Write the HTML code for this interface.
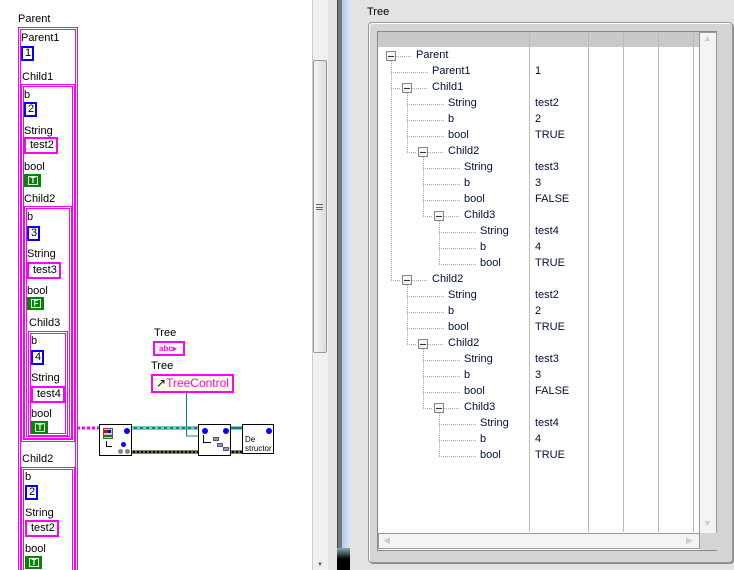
<!DOCTYPE html>
<html><head><meta charset="utf-8"><style>
*{margin:0;padding:0;box-sizing:border-box}
html{width:734px;height:570px;overflow:hidden}
body{width:734px;height:570px;overflow:hidden;background:#fff;font-family:"Liberation Sans",sans-serif;font-size:11px;color:#000;position:relative}
.a{position:absolute;white-space:nowrap}
.cl{position:absolute;border:1px solid #f0f;box-shadow:inset 0 0 0 1px #fff,inset 0 0 0 2px #f0f}
.num{position:absolute;border:2px solid #00f;width:13px;height:15px;font-size:11px;line-height:11px;padding-left:2px;background:#fff}
.str{position:absolute;border:2px solid #f0f;height:17px;font-size:11px;line-height:13px;padding:0 2px 0 4px;background:#fff}
.bl{position:absolute;width:17px;height:13px;background:#080;border:1px solid #080}
.bl span{display:block;margin:1px 3px;width:10px;height:9px;border:1px solid #fff;color:#fff;font-size:8px;font-weight:bold;line-height:8px;text-align:center}
.t{position:absolute;color:#001040;font-size:11px;line-height:14px;white-space:nowrap}
.node{position:absolute;border:1px solid #000;background:#fff}
</style></head><body>
<!-- left panel -->
<div class="a" style="left:18px;top:13px">Parent</div>
<div class="cl" style="left:18px;top:27px;width:60px;height:560px"></div>
<div class="a" style="left:21px;top:32px">Parent1</div>
<div class="num" style="left:21px;top:46px">1</div>
<div class="a" style="left:22px;top:71px">Child1</div>
<div class="cl" style="left:21px;top:84px;width:54px;height:358px"></div>
<div class="a" style="left:24px;top:89px">b</div>
<div class="num" style="left:24px;top:102px">2</div>
<div class="a" style="left:24px;top:125px">String</div>
<div class="str" style="left:24px;top:137px">test2</div>
<div class="a" style="left:24px;top:161px">bool</div>
<div class="bl" style="left:24px;top:174px"><span>T</span></div>
<div class="a" style="left:24px;top:193px">Child2</div>
<div class="cl" style="left:24px;top:206px;width:48px;height:233px"></div>
<div class="a" style="left:27px;top:211px">b</div>
<div class="num" style="left:27px;top:226px">3</div>
<div class="a" style="left:27px;top:248px">String</div>
<div class="str" style="left:27px;top:262px">test3</div>
<div class="a" style="left:27px;top:285px">bool</div>
<div class="bl" style="left:27px;top:297px"><span>F</span></div>
<div class="a" style="left:29px;top:317px">Child3</div>
<div class="cl" style="left:28px;top:331px;width:40px;height:105px"></div>
<div class="a" style="left:31px;top:335px">b</div>
<div class="num" style="left:31px;top:350px">4</div>
<div class="a" style="left:31px;top:372px">String</div>
<div class="str" style="left:31px;top:386px">test4</div>
<div class="a" style="left:31px;top:408px">bool</div>
<div class="bl" style="left:31px;top:421px"><span>T</span></div>
<div class="a" style="left:22px;top:453px">Child2</div>
<div class="cl" style="left:21px;top:467px;width:54px;height:120px"></div>
<div class="a" style="left:25px;top:471px">b</div>
<div class="num" style="left:25px;top:485px">2</div>
<div class="a" style="left:25px;top:507px">String</div>
<div class="str" style="left:25px;top:520px">test2</div>
<div class="a" style="left:25px;top:543px">bool</div>
<div class="bl" style="left:25px;top:556px"><span>T</span></div>

<!-- diagram -->
<div class="a" style="left:154px;top:327px">Tree</div>
<div class="a" style="left:153px;top:341px;width:32px;height:15px;border:2px solid #f0f;background:#fff;font-size:8px;font-weight:bold;color:#f0f;line-height:11px;padding-left:4px">abc▸</div>
<div class="a" style="left:151px;top:360px">Tree</div>
<div class="a" style="left:151px;top:374px;width:83px;height:19px;border:2px solid #f0f;background:#ffffe8;color:#f0f;font-size:12px;line-height:15px;padding-left:3px"><span style="color:#000">↗</span>TreeControl</div>
<svg class="a" style="left:0;top:0" width="310" height="570">
<line x1="77" y1="428" x2="99" y2="428" stroke="#f0f" stroke-width="3" stroke-dasharray="3 2"/>
<line x1="131" y1="428" x2="198" y2="428" stroke="#088" stroke-width="3"/>
<line x1="131" y1="428" x2="198" y2="428" stroke="#fff" stroke-width="1" stroke-dasharray="3 3"/>
<line x1="230" y1="428" x2="242" y2="428" stroke="#088" stroke-width="3"/>
<line x1="131" y1="452" x2="198" y2="452" stroke="#000" stroke-width="3"/>
<line x1="131" y1="452" x2="198" y2="452" stroke="#ee0" stroke-width="1" stroke-dasharray="2 2"/>
<line x1="230" y1="452" x2="242" y2="452" stroke="#000" stroke-width="3"/>
<line x1="230" y1="452" x2="242" y2="452" stroke="#ee0" stroke-width="1" stroke-dasharray="2 2"/>
<polyline points="186.5,393 186.5,436 198,436" fill="none" stroke="#088" stroke-width="1"/>
</svg>
<div class="node" style="left:99px;top:424px;width:33px;height:32px">
<div class="a" style="left:3px;top:3px;width:10px;height:11px;background:#ccc;border:1px solid #555"></div>
<div class="a" style="left:4px;top:5px;width:4px;height:3px;background:#d00"></div>
<div class="a" style="left:8px;top:5px;width:3px;height:3px;background:#00d"></div>
<div class="a" style="left:4px;top:10px;width:8px;height:2px;background:#080"></div>
<div class="a" style="left:24px;top:3px;width:6px;height:6px;border-radius:3px;background:#00f"></div>
<div class="a" style="left:21px;top:17px;width:5px;height:5px;border-radius:3px;background:#00f"></div>
<div class="a" style="left:18px;top:24px;width:5px;height:5px;border-radius:3px;background:#888"></div>
<div class="a" style="left:25px;top:24px;width:5px;height:5px;border-radius:3px;background:#888"></div>
<div class="a" style="left:6px;top:16px;width:6px;height:6px;border-left:1px solid #000;border-bottom:1px solid #000"></div>
</div>
<div class="node" style="left:198px;top:424px;width:33px;height:32px">
<div class="a" style="left:3px;top:3px;width:6px;height:6px;border-radius:3px;background:#00f"></div>
<div class="a" style="left:24px;top:3px;width:6px;height:6px;border-radius:3px;background:#00f"></div>
<div class="a" style="left:4px;top:10px;width:8px;height:8px;border-left:1px solid #000;border-bottom:1px solid #000"></div>
<div class="a" style="left:14px;top:12px;width:6px;height:4px;background:#99b;border:1px solid #557"></div>
<div class="a" style="left:18px;top:18px;width:6px;height:4px;background:#99b;border:1px solid #557"></div>
<div class="a" style="left:24px;top:22px;width:6px;height:4px;background:#99b;border:1px solid #557"></div>
</div>
<div class="node" style="left:242px;top:424px;width:32px;height:30px;font-size:8px;line-height:9px;padding:10px 0 0 2px">De<br>structor
<div class="a" style="left:23px;top:3px;width:6px;height:6px;border-radius:3px;background:#00f"></div></div>

<!-- left scrollbar -->
<div class="a" style="left:312px;top:0;width:16px;height:570px;background:#f0f0f0;border-left:1px solid #ccc"></div>
<div class="a" style="left:313px;top:60px;width:14px;height:293px;background:linear-gradient(90deg,#f4f4f4,#dcdcdc);border:1px solid #999;border-radius:2px"></div>
<div class="a" style="left:316px;top:204px;width:7px;height:6px;border-top:1px solid #666;border-bottom:1px solid #666"><div style="margin-top:2px;border-top:1px solid #666"></div></div>
<div class="a" style="left:317px;top:562px;font-size:6px;color:#555">▼</div>
<!-- divider -->
<div class="a" style="left:328px;top:0;width:22px;height:570px;background:#e3e3e3"></div>
<div class="a" style="left:337px;top:0;width:5px;height:570px;background:#777;border-left:1px solid #444"></div>
<div class="a" style="left:342px;top:0;width:8px;height:570px;background:linear-gradient(90deg,#b0cde8,#d6e6f6)"></div>
<div class="a" style="left:337px;top:548px;width:13px;height:22px;background:linear-gradient(#8aa,#000 50%)"></div>

<!-- right panel -->
<div class="a" style="left:350px;top:0;width:384px;height:570px;background:#e3e3e3"></div>
<div class="a" style="left:367px;top:6px;font-size:11px">Tree</div>
<div class="a" style="left:368px;top:22px;width:365px;height:541px;border:1px solid #999;border-radius:4px;background:#d4d4d4;box-shadow:inset 1px 1px 0 #fff,1px 1px 0 #888"></div>
<div class="a" style="left:377px;top:31px;width:340px;height:520px;border:1px solid #888;background:#fff"></div>
<div class="a" style="left:378px;top:32px;width:322px;height:15px;background:#c9c9c9"></div>
<div class="a" style="left:529px;top:32px;width:1px;height:500px;background:#bbb"></div>
<div class="a" style="left:588px;top:32px;width:1px;height:500px;background:#bbb"></div>
<div class="a" style="left:623px;top:32px;width:1px;height:500px;background:#bbb"></div>
<div class="a" style="left:658px;top:32px;width:1px;height:500px;background:#bbb"></div>
<div class="a" style="left:693px;top:32px;width:1px;height:500px;background:#bbb"></div>
<div class="a" style="left:699px;top:32px;width:18px;height:502px;background:#f4f4f4;border:1px solid #999"></div>
<div class="a" style="left:703px;top:33px;font-size:9px;color:#ccc">▲</div>
<div class="a" style="left:703px;top:518px;font-size:9px;color:#ccc">▼</div>
<div class="a" style="left:378px;top:533px;width:322px;height:16px;background:#f4f4f4;border:1px solid #999"></div>
<div class="a" style="left:383px;top:535px;font-size:9px;color:#ccc">◀</div>
<div class="a" style="left:686px;top:535px;font-size:9px;color:#ccc">▶</div>
<div class="a" style="left:700px;top:533px;width:17px;height:17px;background:#d4d4d4"></div>

<svg class="a" style="left:0;top:0" width="734" height="570">
<g stroke="#aaa" stroke-width="1" stroke-dasharray="1 1" fill="none">
<line x1="391.5" y1="61" x2="391.5" y2="280"/>
<line x1="407.5" y1="93" x2="407.5" y2="152"/>
<line x1="423.5" y1="157" x2="423.5" y2="216"/>
<line x1="439.5" y1="221" x2="439.5" y2="264"/>
<line x1="407.5" y1="285" x2="407.5" y2="344"/>
<line x1="423.5" y1="349" x2="423.5" y2="408"/>
<line x1="439.5" y1="413" x2="439.5" y2="456"/>
<line x1="396" y1="56.5" x2="412" y2="56.5"/>
<line x1="391" y1="72.5" x2="428" y2="72.5"/>
<line x1="391" y1="88.5" x2="401" y2="88.5"/><line x1="412" y1="88.5" x2="428" y2="88.5"/>
<line x1="407" y1="104.5" x2="444" y2="104.5"/>
<line x1="407" y1="120.5" x2="444" y2="120.5"/>
<line x1="407" y1="136.5" x2="444" y2="136.5"/>
<line x1="407" y1="152.5" x2="417" y2="152.5"/><line x1="428" y1="152.5" x2="444" y2="152.5"/>
<line x1="423" y1="168.5" x2="460" y2="168.5"/>
<line x1="423" y1="184.5" x2="460" y2="184.5"/>
<line x1="423" y1="200.5" x2="460" y2="200.5"/>
<line x1="423" y1="216.5" x2="433" y2="216.5"/><line x1="444" y1="216.5" x2="460" y2="216.5"/>
<line x1="439" y1="232.5" x2="476" y2="232.5"/>
<line x1="439" y1="248.5" x2="476" y2="248.5"/>
<line x1="439" y1="264.5" x2="476" y2="264.5"/>
<line x1="391" y1="280.5" x2="401" y2="280.5"/><line x1="412" y1="280.5" x2="428" y2="280.5"/>
<line x1="407" y1="296.5" x2="444" y2="296.5"/>
<line x1="407" y1="312.5" x2="444" y2="312.5"/>
<line x1="407" y1="328.5" x2="444" y2="328.5"/>
<line x1="407" y1="344.5" x2="417" y2="344.5"/><line x1="428" y1="344.5" x2="444" y2="344.5"/>
<line x1="423" y1="360.5" x2="460" y2="360.5"/>
<line x1="423" y1="376.5" x2="460" y2="376.5"/>
<line x1="423" y1="392.5" x2="460" y2="392.5"/>
<line x1="423" y1="408.5" x2="433" y2="408.5"/><line x1="444" y1="408.5" x2="460" y2="408.5"/>
<line x1="439" y1="424.5" x2="476" y2="424.5"/>
<line x1="439" y1="440.5" x2="476" y2="440.5"/>
<line x1="439" y1="456.5" x2="476" y2="456.5"/>
</g>
<g fill="#f4f4f4" stroke="#888">
<rect x="386.5" y="51.5" width="9" height="9"/>
<rect x="402.5" y="83.5" width="9" height="9"/>
<rect x="418.5" y="147.5" width="9" height="9"/>
<rect x="434.5" y="211.5" width="9" height="9"/>
<rect x="402.5" y="275.5" width="9" height="9"/>
<rect x="418.5" y="339.5" width="9" height="9"/>
<rect x="434.5" y="403.5" width="9" height="9"/>
</g>
<g stroke="#335" stroke-width="1">
<line x1="388" y1="56.5" x2="394" y2="56.5"/>
<line x1="404" y1="88.5" x2="410" y2="88.5"/>
<line x1="420" y1="152.5" x2="426" y2="152.5"/>
<line x1="436" y1="216.5" x2="442" y2="216.5"/>
<line x1="404" y1="280.5" x2="410" y2="280.5"/>
<line x1="420" y1="344.5" x2="426" y2="344.5"/>
<line x1="436" y1="408.5" x2="442" y2="408.5"/>
</g>
</svg>

<div class="t" style="left:416px;top:48px">Parent</div>
<div class="t" style="left:432px;top:64px">Parent1</div><div class="t" style="left:535px;top:64px">1</div>
<div class="t" style="left:432px;top:80px">Child1</div>
<div class="t" style="left:448px;top:96px">String</div><div class="t" style="left:535px;top:96px">test2</div>
<div class="t" style="left:448px;top:112px">b</div><div class="t" style="left:535px;top:112px">2</div>
<div class="t" style="left:448px;top:128px">bool</div><div class="t" style="left:535px;top:128px">TRUE</div>
<div class="t" style="left:448px;top:144px">Child2</div>
<div class="t" style="left:464px;top:160px">String</div><div class="t" style="left:535px;top:160px">test3</div>
<div class="t" style="left:464px;top:176px">b</div><div class="t" style="left:535px;top:176px">3</div>
<div class="t" style="left:464px;top:192px">bool</div><div class="t" style="left:535px;top:192px">FALSE</div>
<div class="t" style="left:464px;top:208px">Child3</div>
<div class="t" style="left:480px;top:224px">String</div><div class="t" style="left:535px;top:224px">test4</div>
<div class="t" style="left:480px;top:240px">b</div><div class="t" style="left:535px;top:240px">4</div>
<div class="t" style="left:480px;top:256px">bool</div><div class="t" style="left:535px;top:256px">TRUE</div>
<div class="t" style="left:432px;top:272px">Child2</div>
<div class="t" style="left:448px;top:288px">String</div><div class="t" style="left:535px;top:288px">test2</div>
<div class="t" style="left:448px;top:304px">b</div><div class="t" style="left:535px;top:304px">2</div>
<div class="t" style="left:448px;top:320px">bool</div><div class="t" style="left:535px;top:320px">TRUE</div>
<div class="t" style="left:448px;top:336px">Child2</div>
<div class="t" style="left:464px;top:352px">String</div><div class="t" style="left:535px;top:352px">test3</div>
<div class="t" style="left:464px;top:368px">b</div><div class="t" style="left:535px;top:368px">3</div>
<div class="t" style="left:464px;top:384px">bool</div><div class="t" style="left:535px;top:384px">FALSE</div>
<div class="t" style="left:464px;top:400px">Child3</div>
<div class="t" style="left:480px;top:416px">String</div><div class="t" style="left:535px;top:416px">test4</div>
<div class="t" style="left:480px;top:432px">b</div><div class="t" style="left:535px;top:432px">4</div>
<div class="t" style="left:480px;top:448px">bool</div><div class="t" style="left:535px;top:448px">TRUE</div>
</body></html>
